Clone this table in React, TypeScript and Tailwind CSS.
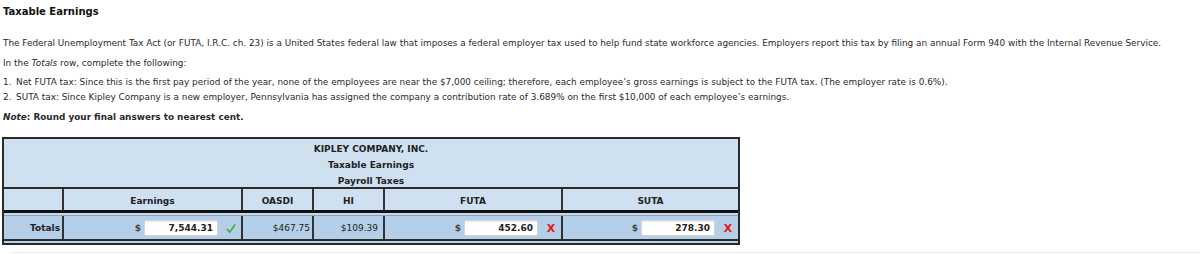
import React from "react";

const CHECK = (
  <svg width="11" height="11" viewBox="0 0 11 11" className="inline-block">
    <path d="M1 6 L4 9.5 L10 1" fill="none" stroke="#3fae3f" strokeWidth="1.8" />
  </svg>
);

function Cross() {
  return <span className="text-[11px] font-bold text-[#e8141b]">X</span>;
}

function AnswerCell({ value, mark }: { value: string; mark: "ok" | "bad" }) {
  return (
    <div className="flex items-center justify-end gap-[3px] border-l-2 border-[#333] pr-[5px] pt-[1px]">
      <span className="font-bold text-[#444]">$</span>
      <div className="flex h-[16px] w-[74px] items-center justify-end rounded-[2px] border border-[#d6d6d6] bg-white pr-[4px] font-bold text-[#222] shadow-[inset_0_1px_1px_rgba(0,0,0,0.08)]">
        {value}
      </div>
      <span className="ml-[5px] flex w-[10px] justify-center">
        {mark === "ok" ? CHECK : <Cross />}
      </span>
    </div>
  );
}

export default function App() {
  return (
    <div className="relative h-[254px] w-[1200px] overflow-hidden bg-white font-['DejaVu_Sans',Verdana,sans-serif] text-[8.9px] leading-[15px] text-[#2a2a2a]">
      <div className="px-[3px] pt-[4px]">
        <h1 className="text-[10px] font-bold text-[#111]">Taxable Earnings</h1>
        <p className="mt-[17px]">
          The Federal Unemployment Tax Act (or FUTA, I.R.C. ch. 23) is a United States federal law that imposes a
          federal employer tax used to help fund state workforce agencies. Employers report this tax by filing an
          annual Form 940 with the Internal Revenue Service.
        </p>
        <p className="mt-[5px]">
          In the <i>Totals</i> row, complete the following:
        </p>
        <ol className="mt-[4px]">
          <li className="flex">
            <span className="w-[13px]">1.</span>
            <span>
              Net FUTA tax: Since this is the first pay period of the year, none of the employees are near the $7,000
              ceiling; therefore, each employee’s gross earnings is subject to the FUTA tax. (The employer rate is
              0.6%).
            </span>
          </li>
          <li className="flex">
            <span className="w-[13px]">2.</span>
            <span>
              SUTA tax: Since Kipley Company is a new employer, Pennsylvania has assigned the company a contribution
              rate of 3.689% on the first $10,000 of each employee’s earnings.
            </span>
          </li>
        </ol>
        <p className="mt-[5px] font-bold">
          <i>Note</i>: Round your final answers to nearest cent.
        </p>
      </div>

      {/* Table */}
      <div className="ml-[2px] mt-[12px] w-[738px] border-2 border-[#2a2a2a] bg-[#cfe0f1] text-[9px] text-[#222]">
        <div className="flex h-[48px] flex-col items-center justify-center pt-[3px] font-bold leading-[16px]">
          <div>KIPLEY COMPANY, INC.</div>
          <div>Taxable Earnings</div>
          <div>Payroll Taxes</div>
        </div>
        <div className="h-[2px] bg-[#2a2a2a]" />
        <div className="grid h-[21px] grid-cols-[58px_179px_71px_71px_178px_177px] font-bold">
          <div />
          <div className="flex items-center justify-center border-l-2 border-[#333] pt-[3px]">Earnings</div>
          <div className="flex items-center justify-center border-l-2 border-[#333] pt-[3px]">OASDI</div>
          <div className="flex items-center justify-center border-l-2 border-[#333] pt-[3px]">HI</div>
          <div className="flex items-center justify-center border-l-2 border-[#333] pt-[3px]">FUTA</div>
          <div className="flex items-center justify-center border-l-2 border-[#333] pt-[3px]">SUTA</div>
        </div>
        <div className="h-[3px] bg-[#111]" />
        <div className="h-[2px] bg-[#c4d9ee]" />
        <div className="h-[1px] bg-[#8aa3ba]" />
        <div className="grid h-[23px] grid-cols-[58px_179px_71px_71px_178px_177px] bg-[#b4cfe7]">
          <div className="flex items-center justify-end pr-[2px] pt-[1px] font-bold">Totals</div>
          <AnswerCell value="7,544.31" mark="ok" />
          <div className="flex items-center justify-end border-l-2 border-[#333] pr-[2px] pt-[1px]">$467.75</div>
          <div className="flex items-center justify-end border-l-2 border-[#333] pr-[5px] pt-[1px]">$109.39</div>
          <AnswerCell value="452.60" mark="bad" />
          <AnswerCell value="278.30" mark="bad" />
        </div>
        <div className="h-[2px] bg-[#2a2a2a]" />
        <div className="h-[2px] bg-[#b4cfe7]" />
      </div>

      <div className="absolute bottom-[1px] left-[10px] right-0 h-[1px] bg-[#ececec]" />
    </div>
  );
}
